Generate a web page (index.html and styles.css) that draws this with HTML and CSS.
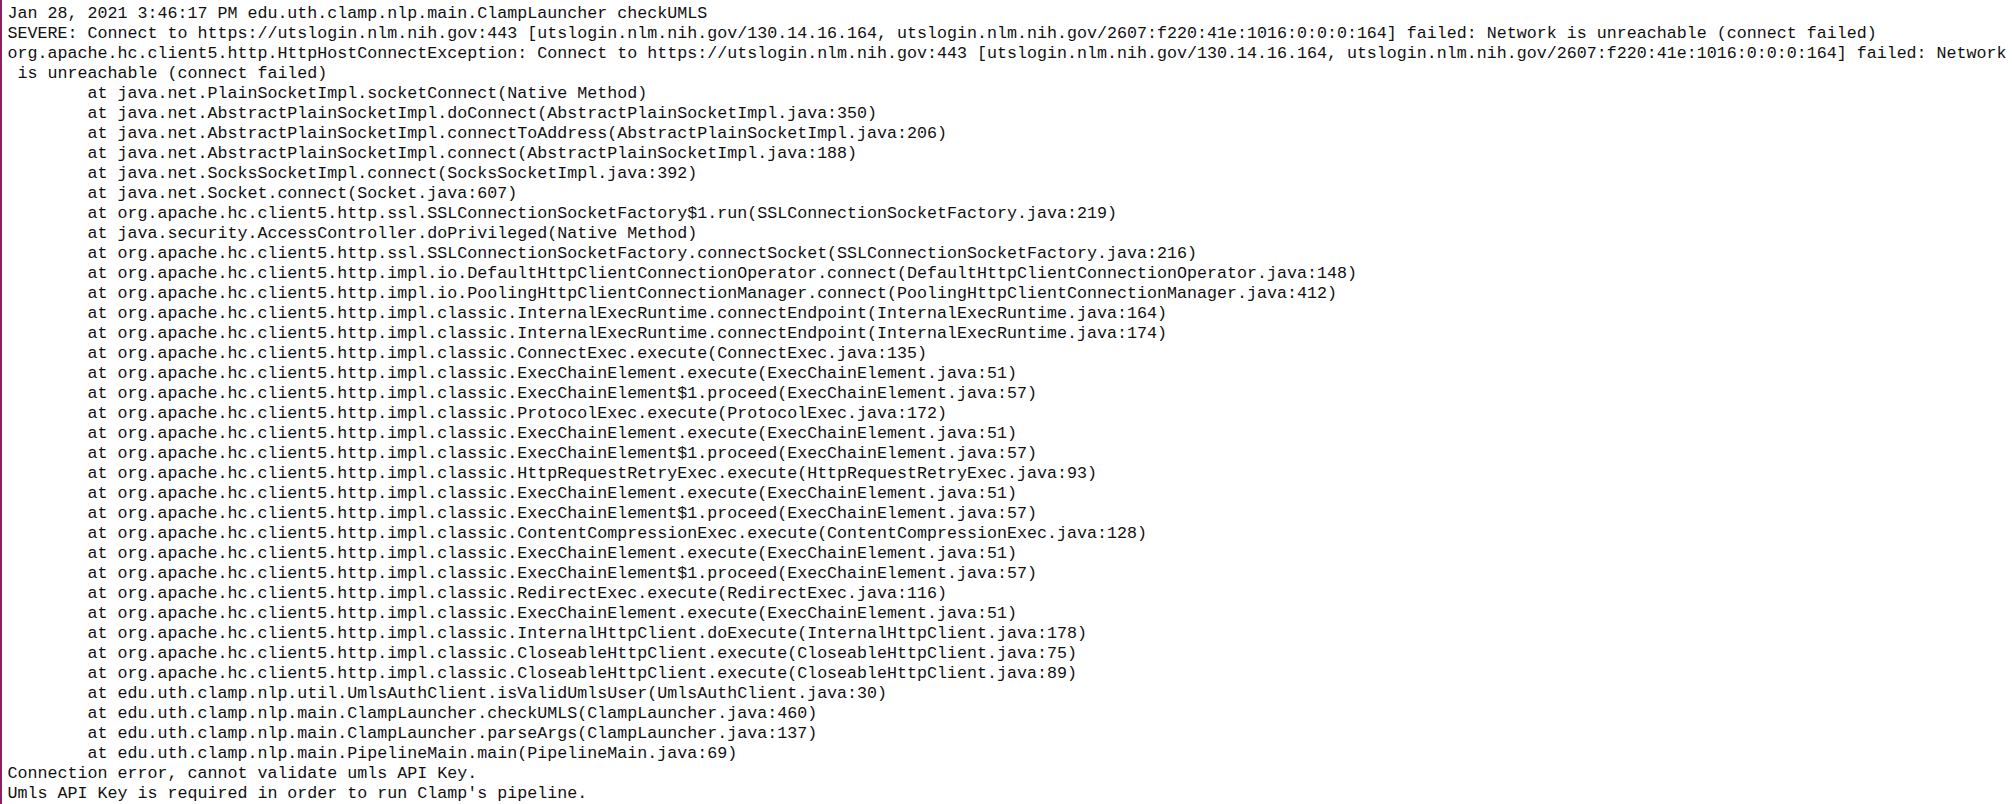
FILE: index.html
```html
<!DOCTYPE html>
<html>
<head>
<meta charset="utf-8">
<link rel="stylesheet" href="styles.css">
</head>
<body>
<div class="terminal">
<pre class="log">Jan 28, 2021 3:46:17 PM edu.uth.clamp.nlp.main.ClampLauncher checkUMLS
SEVERE: Connect to https://utslogin.nlm.nih.gov:443 [utslogin.nlm.nih.gov/130.14.16.164, utslogin.nlm.nih.gov/2607:f220:41e:1016:0:0:0:164] failed: Network is unreachable (connect failed)
org.apache.hc.client5.http.HttpHostConnectException: Connect to https://utslogin.nlm.nih.gov:443 [utslogin.nlm.nih.gov/130.14.16.164, utslogin.nlm.nih.gov/2607:f220:41e:1016:0:0:0:164] failed: Network
 is unreachable (connect failed)
        at java.net.PlainSocketImpl.socketConnect(Native Method)
        at java.net.AbstractPlainSocketImpl.doConnect(AbstractPlainSocketImpl.java:350)
        at java.net.AbstractPlainSocketImpl.connectToAddress(AbstractPlainSocketImpl.java:206)
        at java.net.AbstractPlainSocketImpl.connect(AbstractPlainSocketImpl.java:188)
        at java.net.SocksSocketImpl.connect(SocksSocketImpl.java:392)
        at java.net.Socket.connect(Socket.java:607)
        at org.apache.hc.client5.http.ssl.SSLConnectionSocketFactory$1.run(SSLConnectionSocketFactory.java:219)
        at java.security.AccessController.doPrivileged(Native Method)
        at org.apache.hc.client5.http.ssl.SSLConnectionSocketFactory.connectSocket(SSLConnectionSocketFactory.java:216)
        at org.apache.hc.client5.http.impl.io.DefaultHttpClientConnectionOperator.connect(DefaultHttpClientConnectionOperator.java:148)
        at org.apache.hc.client5.http.impl.io.PoolingHttpClientConnectionManager.connect(PoolingHttpClientConnectionManager.java:412)
        at org.apache.hc.client5.http.impl.classic.InternalExecRuntime.connectEndpoint(InternalExecRuntime.java:164)
        at org.apache.hc.client5.http.impl.classic.InternalExecRuntime.connectEndpoint(InternalExecRuntime.java:174)
        at org.apache.hc.client5.http.impl.classic.ConnectExec.execute(ConnectExec.java:135)
        at org.apache.hc.client5.http.impl.classic.ExecChainElement.execute(ExecChainElement.java:51)
        at org.apache.hc.client5.http.impl.classic.ExecChainElement$1.proceed(ExecChainElement.java:57)
        at org.apache.hc.client5.http.impl.classic.ProtocolExec.execute(ProtocolExec.java:172)
        at org.apache.hc.client5.http.impl.classic.ExecChainElement.execute(ExecChainElement.java:51)
        at org.apache.hc.client5.http.impl.classic.ExecChainElement$1.proceed(ExecChainElement.java:57)
        at org.apache.hc.client5.http.impl.classic.HttpRequestRetryExec.execute(HttpRequestRetryExec.java:93)
        at org.apache.hc.client5.http.impl.classic.ExecChainElement.execute(ExecChainElement.java:51)
        at org.apache.hc.client5.http.impl.classic.ExecChainElement$1.proceed(ExecChainElement.java:57)
        at org.apache.hc.client5.http.impl.classic.ContentCompressionExec.execute(ContentCompressionExec.java:128)
        at org.apache.hc.client5.http.impl.classic.ExecChainElement.execute(ExecChainElement.java:51)
        at org.apache.hc.client5.http.impl.classic.ExecChainElement$1.proceed(ExecChainElement.java:57)
        at org.apache.hc.client5.http.impl.classic.RedirectExec.execute(RedirectExec.java:116)
        at org.apache.hc.client5.http.impl.classic.ExecChainElement.execute(ExecChainElement.java:51)
        at org.apache.hc.client5.http.impl.classic.InternalHttpClient.doExecute(InternalHttpClient.java:178)
        at org.apache.hc.client5.http.impl.classic.CloseableHttpClient.execute(CloseableHttpClient.java:75)
        at org.apache.hc.client5.http.impl.classic.CloseableHttpClient.execute(CloseableHttpClient.java:89)
        at edu.uth.clamp.nlp.util.UmlsAuthClient.isValidUmlsUser(UmlsAuthClient.java:30)
        at edu.uth.clamp.nlp.main.ClampLauncher.checkUMLS(ClampLauncher.java:460)
        at edu.uth.clamp.nlp.main.ClampLauncher.parseArgs(ClampLauncher.java:137)
        at edu.uth.clamp.nlp.main.PipelineMain.main(PipelineMain.java:69)
Connection error, cannot validate umls API Key.
Umls API Key is required in order to run Clamp's pipeline.</pre>
</div>
</body>
</html>
```

FILE: styles.css
```css
html, body {
  margin: 0;
  padding: 0;
  background: #ffffff;
}

.terminal {
  height: 804px;
  overflow: hidden;
  border-left: 2px solid #8c1f5e;
  padding-left: 5.5px;
  box-sizing: border-box;
}

.log {
  margin: 4px 0 0 0;
  font-family: "Liberation Mono", "DejaVu Sans Mono", monospace;
  font-size: 16.67px;
  line-height: 20px;
  color: #111111;
  white-space: pre;
}
```
